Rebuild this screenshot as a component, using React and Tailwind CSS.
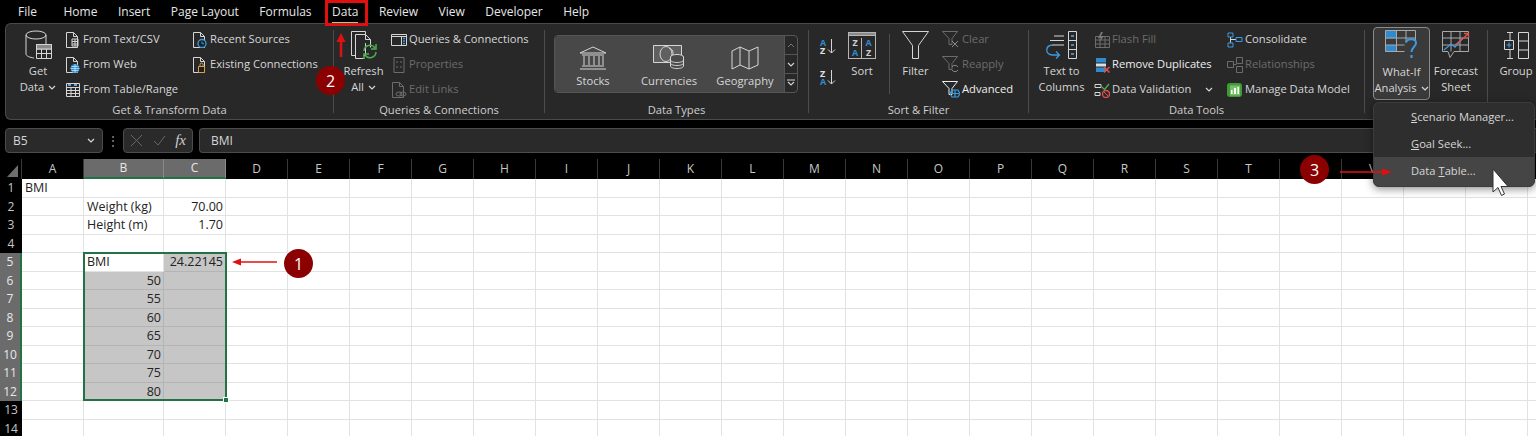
import React from "react";

const columns = ["A","B","C","D","E","F","G","H","I","J","K","L","M","N","O","P","Q","R","S","T","U","V","W","X","Y"];
const colWidth = { A: "w-[62px]", B: "w-[80px]" };
const tabs = ["Home", "Insert", "Page Layout", "Formulas", "Data", "Review", "View", "Developer", "Help"];

const cells = {
    1: { A: "BMI" },
    2: { B: "Weight (kg)", C: "70.00" },
    3: { B: "Height (m)", C: "1.70" },
    5: { B: "BMI", C: "24.22145" },
    6: { B: "50" },
    7: { B: "55" },
    8: { B: "60" },
    9: { B: "65" },
    10: { B: "70" },
    11: { B: "75" },
    12: { B: "80" },
};

function Svg({ w = 16, h = 16, children, className = "" }) {
    return (
        <svg width={w} height={h} viewBox={`0 0 ${w} ${h}`} fill="none" stroke="currentColor" strokeWidth="1" className={`shrink-0 ${className}`}>
            {children}
        </svg>
    );
}

const Doc = () => <path d="M1.5 .5h7l4 4v11h-11z M8.5 .5v4h4" />;

const TextCsvIcon = () => (
    <Svg><Doc /><path d="M7 7h6v7H7z M7 9.5h6 M7 12h6 M10 7v7" /></Svg>
);
const WebIcon = () => (
    <Svg>
        <Doc />
        <circle cx="10" cy="11.5" r="4.5" fill="#2e8bd0" stroke="none" />
        <path d="M5.5 11.5h9 M10 7v9 M6.5 9.5h7 M6.5 13.5h7" stroke="#d8ecfa" strokeWidth=".7" />
    </Svg>
);
const TableIcon = () => (
    <Svg>
        <path d="M1.5 1.5h13v13h-13z M1.5 5.5h13 M1.5 8.5h13 M1.5 11.5h13 M6 5.5v9 M10.5 5.5v9" />
        <path d="M3 3h3 M9 3h3" stroke="#5aa9e0" strokeWidth="2" />
    </Svg>
);
const RecentIcon = () => (
    <Svg>
        <Doc />
        <circle cx="10" cy="11.5" r="4" fill="#1f1f1f" stroke="#3b9ae0" strokeWidth="1.3" />
        <path d="M10 9.5v2.2h2" stroke="#3b9ae0" />
    </Svg>
);
const ExistingIcon = () => (
    <Svg>
        <Doc />
        <path d="M6.5 9.5h6v6h-6z" fill="#1f1f1f" stroke="#d9a04a" />
        <path d="M8 9.5V7.5a1.5 1.5 0 0 1 3 0v2" stroke="#d9a04a" />
    </Svg>
);
const QueriesIcon = () => (
    <Svg>
        <path d="M.5 2.5h15v11H.5z M.5 4.5h15" />
        <path d="M10.5 5v8" />
        <path d="M12 6.5h2 M12 9h2 M12 11.5h2" stroke="#3b9ae0" strokeWidth="1.4" />
    </Svg>
);
const PropsIcon = () => (
    <Svg><path d="M3 .5h10v15H3z M5 5h2 M9 5h2 M5 10h2 M9 10h2" /></Svg>
);
const LinksIcon = () => (
    <Svg>
        <Doc />
        <ellipse cx="8" cy="12" rx="3" ry="2" />
        <ellipse cx="12" cy="12" rx="3" ry="2" />
    </Svg>
);
const GetDataIcon = () => (
    <Svg w={28} h={30}>
        <ellipse cx="12" cy="5" rx="10" ry="4" />
        <path d="M2 5v19c0 2 4 3.5 8 4 M22 5v9" />
        <path d="M12.5 14.5h15v14h-15z M12.5 19h15 M12.5 23.5h15 M17.5 14.5v14 M22.5 14.5v14" fill="#282828" />
        <path d="M12.5 14.5h15v4.5h-15z" fill="#8a8a8a" />
    </Svg>
);
const RefreshIcon = () => (
    <Svg w={28} h={30}>
        <path d="M1.5 1.5h14v24h-14z" />
        <path d="M5.5 4.5h10l5 5v8 M5.5 4.5v24h9 M15.5 4.5v5h5" fill="#282828" />
        <path d="M14 21a6 6 0 0 1 11-3 M26 22a6 6 0 0 1-11 3" stroke="#4caf50" strokeWidth="1.5" />
        <path d="M26 14v5h-5 M14 29v-5h5" stroke="#4caf50" strokeWidth="1.5" />
    </Svg>
);
const BankIcon = () => (
    <Svg w={28} h={24}>
        <path d="M1 7 14 1l13 6z M3 9h22 M5 10v9 M10 10v9 M15 10v9 M20 10v9 M24 10v9 M3 20h22 M1 23h26" />
    </Svg>
);
const CurrencyIcon = () => (
    <Svg w={32} h={26}>
        <path d="M.5 1.5h28v17H.5z" fill="#8f8f8f" fillOpacity=".35" />
        <ellipse cx="13" cy="10" rx="6" ry="7.5" />
        <path d="M19 12a5 5 0 0 0-3-8" />
        <ellipse cx="24" cy="13" rx="6.5" ry="2.5" fill="#4a4a4a" />
        <path d="M17.5 13v9c0 1.5 3 2.5 6.500 2.500s6.500-1 6.500-2.500v-9 M17.500 16c0 1.500 3 2.500 6.500 2.500s6.500-1 6.500-2.500 M17.500 19c0 1.500 3 2.500 6.500 2.500s6.500-1 6.500-2.500" fill="#4a4a4a" />
    </Svg>
);
const MapIcon = () => (
    <Svg w={28} h={24}>
        <path d="M1 5l8-4 9 4 9-4v18l-9 4-9-4-8 4z M9 1v18 M18 5v18" />
    </Svg>
);
const ChevUp = () => <Svg w={8} h={5}><path d="M1 4l3-3 3 3" /></Svg>;
const ChevDown = ({ className = "" }) => <Svg w={8} h={5} className={className}><path d="M1 1l3 3 3-3" strokeWidth="1.2" /></Svg>;
const MoreDown = () => <Svg w={8} h={8}><path d="M0 1h8 M1 3l3 3 3-3" strokeWidth="1.2" /></Svg>;

const SortAz = ({ flip }) => (
    <div className="relative flex items-center w-[18px] h-[17px]">
        <div className="flex flex-col text-[9px] leading-[8px] font-bold">
            <span className={flip ? "text-[#e0e0e0]" : "text-[#2e8bd0]"}>{flip ? "Z" : "A"}</span>
            <span className={flip ? "text-[#2e8bd0]" : "text-[#e0e0e0]"}>{flip ? "A" : "Z"}</span>
        </div>
        <Svg w={9} h={15} className="ml-[1px]"><path d="M4.500 0v14 M1 10.500l3.500 3.500 3.500-3.500" /></Svg>
    </div>
);
const SortIcon = () => (
    <div className="w-[28px] h-[27px] border border-[#b5b5b5] flex flex-col">
        <div className="h-[3px] border-b border-[#b5b5b5] bg-[#8a8a8a]" />
        <div className="flex-1 grid grid-cols-2 text-[9px] leading-[10px] font-bold text-center pt-[2px]">
            <span className="border-r border-[#b5b5b5] text-[#cfcfcf]">Z<br /><span className="text-[#2e8bd0]">A</span></span>
            <span className="text-[#2e8bd0]">A<br /><span className="text-[#cfcfcf]">Z</span></span>
        </div>
    </div>
);
const Funnel = () => (
    <Svg w={27} h={28}>
        <path d="M.5 .5h26l-10 14v13h-6v-13z" />
    </Svg>
);
const SmallFunnel = ({ mark, color }) => (
    <Svg w={18} h={17}>
        <path d="M.5 .5h15l-5.500 7v6h-3v-6z" />
        {mark === "x" && <path d="M10 10l6 6 M16 10l-6 6" stroke={color} />}
        {mark === "r" && <path d="M10 11a3.500 3.500 0 0 1 6 0 M16 14a3.500 3.500 0 0 1-6 0" stroke={color} />}
        {mark === "a" && <path d="M10 9h6l2 3.500-2 3.500h-6l-2-3.500z M13 9v7 M9 12.500h8" stroke={color} strokeWidth="1.200" />}
    </Svg>
);
const TextColsIcon = () => (
    <Svg w={32} h={28}>
        <path d="M8 5h10 M4 9.500h14 M6 14h12" />
        <path d="M22.500 .5h8v27h-8z M22.500 9.500h8 M22.500 18.500h8" />
        <path d="M25 5h3 M25 14h3 M25 23h3" stroke="#5aa9e0" strokeWidth="1.500" />
        <path d="M6 14c-7 1-7 9 0 10h7 M10 20.500l3.500 3.500-3.500 3.500" stroke="#3b9ae0" strokeWidth="1.300" />
    </Svg>
);
const FlashIcon = () => (
    <Svg><path d="M1.500 4.500h14v11h-14z M1.500 8h14 M1.500 12h14 M6 4.500v11 M11 4.500v11" /><path d="M7 0L4 6h3l-2 5 5-7H7l2-4z" fill="#777" stroke="none" /></Svg>
);
const DuplicatesIcon = () => (
    <Svg>
        <rect x="2" y="1" width="10" height="4.500" fill="#2e8bd0" stroke="none" />
        <rect x="2" y="6.500" width="10" height="3" fill="#dedede" stroke="none" />
        <rect x="2" y="10.500" width="10" height="4.500" fill="#2e8bd0" stroke="none" />
        <path d="M10 10l5.500 5.500 M15.500 10L10 15.500" stroke="#e0524a" strokeWidth="1.500" />
    </Svg>
);
const ValidationIcon = () => (
    <Svg>
        <path d="M1 2.500h6v3H1z M1 10.500h5v3H1z" />
        <path d="M8 5l2.500 2.500L15 2" stroke="#4caf50" strokeWidth="1.300" />
        <circle cx="12" cy="12" r="3.500" stroke="#e0524a" strokeWidth="1.300" />
        <path d="M9.500 9.500l5 5" stroke="#e0524a" />
    </Svg>
);
const ConsolidateIcon = () => (
    <Svg>
        <path d="M3.500 5v6 M3.500 7.500H9" />
        <path d="M1 1h5v4H1z M1 11h5v4H1z M9 5.500h6v4H9z" stroke="#3b9ae0" />
    </Svg>
);
const RelationsIcon = () => (
    <Svg><path d="M.5 4.500h6v6h-6z M9.500 .5h6v6h-6z M9.500 9.500h6v6h-6z M6.500 7.500h3" /></Svg>
);
const ModelIcon = () => (
    <svg width="16" height="16" viewBox="0 0 16 16" className="shrink-0">
        <rect x="0" y="1" width="15" height="14" rx="3" fill="#3f9c35" />
        <path d="M3 3.500h10v10H3z" fill="#7ac06c" />
        <path d="M7 6h2v6H7z M10.500 5h1.500v7h-1.500z M4 8h1.500v4H4z" fill="#fff" />
    </svg>
);
const WhatIfIcon = () => (
    <Svg w={34} h={32}>
        <rect x=".5" y=".5" width="11" height="8" fill="#2e8bd0" stroke="none" />
        <rect x=".5" y="15" width="11" height="7" fill="#2e8bd0" stroke="none" />
        <path d="M.5 .5h30v13 M.5 .5v21h19 M.5 8h30 M.5 15h19 M11.500 .5v21 M21 .5v12" stroke="#a8a8a8" />
        <path d="M21 12.500c1-4.500 10-4.500 10 .5 0 4-4.500 4-4.500 9" stroke="#3b9ae0" strokeWidth="2" />
        <path d="M26.500 25v3" stroke="#3b9ae0" strokeWidth="2.200" />
    </Svg>
);
const ForecastIcon = () => (
    <Svg w={28} h={28}>
        <path d="M.5 .5h26v20H12l-4 6-2-6H.5z M.5 7h26 M.5 14h26 M9 .5v20 M18 .5v20" stroke="#a8a8a8" />
        <path d="M2 19l7-6 4 3 8-9" stroke="#3b9ae0" strokeWidth="1.300" />
        <path d="M13 14l5-4 8-7 M22 2.500h4.500V7" stroke="#e0524a" strokeWidth="1.300" />
    </Svg>
);
const GroupIcon = () => (
    <Svg w={25} h={27}>
        <path d="M3 .5h6 M6 .5v8 M.5 8.500h9v9h-9z M6 17.500v9 M3 26.500h6" />
        <path d="M5 10.500v5 M2.500 13h5" stroke="#3b9ae0" strokeWidth="1.200" />
        <path d="M14.500 .5h10v26h-10z M14.500 9h10 M14.500 18h10" />
    </Svg>
);

function RowItem({ icon, label, disabled, bright, children }) {
    return (
        <div className={`h-[25px] flex items-center gap-[2px] whitespace-nowrap ${disabled ? "text-[#6c6c6c]" : bright ? "text-[#eeeeee]" : "text-[#d6d6d6]"}`}>
            {icon}
            <span>{label}</span>
            {children}
        </div>
    );
}

function LargeButton({ icon, lines, chevron, className = "" }) {
    return (
        <div className={`flex flex-col items-center text-center text-[#d6d6d6] leading-[16px] whitespace-nowrap ${className}`}>
            <div className="h-[36px] flex items-center">{icon}</div>
            {lines.map((line, i) => (
                <div key={line} className="flex items-center gap-[4px]">
                    {line}
                    {chevron && i === lines.length - 1 && <ChevDown />}
                </div>
            ))}
        </div>
    );
}

function Group({ width, label, children }) {
    return (
        <div className={`${width} flex flex-col shrink-0`}>
            <div className="h-[75px] mt-[3px] flex">{children}</div>
            <div className="h-[16px] leading-[16px] text-center text-[#cfcfcf] whitespace-nowrap">{label}</div>
        </div>
    );
}

const Sep = () => <div className="w-px my-[6px] bg-[#4c4c4c] shrink-0" />;

function GalleryItem({ icon, label }) {
    return (
        <div className="w-[76px] flex flex-col items-center text-[#d6d6d6]">
            <div className="h-[37px] flex items-end pb-[3px]">{icon}</div>
            <span className="leading-[16px]">{label}</span>
        </div>
    );
}

function Ribbon() {
    return (
        <div className="h-[97px] ml-[5px] flex border border-r-0 border-[#4a4a4a] rounded-l-md bg-[#282828] text-[11.2px]">
            <Group width="w-[327px]" label="Get & Transform Data">
                <LargeButton className="w-[59px] pl-[8px] pr-[3px]" icon={<GetDataIcon />} lines={["Get", "Data"]} chevron />
                <div className="w-[127px] text-[#d6d6d6]">
                    <RowItem icon={<TextCsvIcon />} label="From Text/CSV" />
                    <RowItem icon={<WebIcon />} label="From Web" />
                    <RowItem icon={<TableIcon />} label="From Table/Range" />
                </div>
                <div>
                    <RowItem icon={<RecentIcon />} label="Recent Sources" />
                    <RowItem icon={<ExistingIcon />} label="Existing Connections" />
                </div>
            </Group>
            <Sep />
            <Group width="w-[210px]" label="Queries & Connections">
                <LargeButton className="w-[57px] pl-[2px]" icon={<RefreshIcon />} lines={["Refresh", "All"]} chevron />
                <div>
                    <RowItem icon={<QueriesIcon />} label="Queries & Connections" />
                    <RowItem icon={<PropsIcon />} label="Properties" disabled />
                    <RowItem icon={<LinksIcon />} label="Edit Links" disabled />
                </div>
            </Group>
            <Sep />
            <Group width="w-[263px]" label="Data Types">
                <div className="ml-[9px] mt-[8px] h-[58px] w-[244px] flex rounded border border-[#555] overflow-hidden">
                    <div className="w-[229px] flex bg-[#484848]">
                        <GalleryItem icon={<BankIcon />} label="Stocks" />
                        <GalleryItem icon={<CurrencyIcon />} label="Currencies" />
                        <GalleryItem icon={<MapIcon />} label="Geography" />
                    </div>
                    <div className="flex-1 flex flex-col text-[#d0d0d0] border-l border-[#555]">
                        <div className="flex-1 flex items-center justify-center border-b border-[#555] text-[#777]"><ChevUp /></div>
                        <div className="flex-1 flex items-center justify-center border-b border-[#555]"><ChevDown /></div>
                        <div className="flex-1 flex items-center justify-center"><MoreDown /></div>
                    </div>
                </div>
            </Group>
            <Sep />
            <Group width="w-[219px]" label="Sort & Filter">
                <div className="w-[33px] pl-[11px] pt-[11px] flex flex-col gap-[14px] text-[#d6d6d6]">
                    <SortAz />
                    <SortAz flip />
                </div>
                <LargeButton className="w-[40px]" icon={<SortIcon />} lines={["Sort"]} />
                <div className="w-px h-[60px] mt-[7px] ml-[7px] bg-[#4c4c4c]" />
                <LargeButton className="w-[51px]" icon={<Funnel />} lines={["Filter"]} />
                <div className="ml-[1px]">
                    <RowItem icon={<SmallFunnel mark="x" color="#8a8a8a" />} label="Clear" disabled />
                    <RowItem icon={<SmallFunnel mark="r" color="#8a8a8a" />} label="Reapply" disabled />
                    <RowItem icon={<SmallFunnel mark="a" color="#3b9ae0" />} label="Advanced" bright />
                </div>
            </Group>
            <Sep />
            <Group width="w-[335px]" label="Data Tools">
                <LargeButton className="w-[65px]" icon={<TextColsIcon />} lines={["Text to", "Columns"]} />
                <div className="w-[133px]">
                    <RowItem icon={<FlashIcon />} label="Flash Fill" disabled />
                    <RowItem icon={<DuplicatesIcon />} label="Remove Duplicates" bright />
                    <RowItem icon={<ValidationIcon />} label="Data Validation">
                        <ChevDown className="ml-[12px]" />
                    </RowItem>
                </div>
                <div>
                    <RowItem icon={<ConsolidateIcon />} label="Consolidate" />
                    <RowItem icon={<RelationsIcon />} label="Relationships" disabled />
                    <RowItem icon={<ModelIcon />} label="Manage Data Model" />
                </div>
            </Group>
            <Sep />
            <Group width="w-[122px]" label="">
                <LargeButton className="ml-[8px] w-[57px] h-[73px] rounded border border-[#8a8a8a] bg-[#3a3a3a]" icon={<WhatIfIcon />} lines={["What-If", "Analysis"]} chevron />
                <LargeButton className="ml-[1px] w-[50px]" icon={<ForecastIcon />} lines={["Forecast", "Sheet"]} />
            </Group>
            <Sep />
            <Group width="w-[48px]" label="">
                <LargeButton className="w-full pl-[8px]" icon={<GroupIcon />} lines={["Group"]} />
            </Group>
        </div>
    );
}

function FormulaBar() {
    return (
        <div className="h-[25px] mt-[8px] flex items-stretch text-[12px] text-[#d6d6d6]">
            <div className="ml-[5px] w-[98px] flex items-center justify-between px-[7px] rounded border border-[#4c4c4c] bg-[#2a2a2a]">
                B5
                <ChevDown />
            </div>
            <div className="w-[20px] flex items-center justify-center text-[#9a9a9a]">⋮</div>
            <div className="w-[70px] flex items-center justify-between px-[6px] rounded border border-[#4c4c4c] bg-[#2a2a2a]">
                <Svg w={13} h={13} className="text-[#666]"><path d="M1 1l11 11 M12 1L1 12" /></Svg>
                <Svg w={13} h={13} className="text-[#666]"><path d="M1 7l4 4 7-9" /></Svg>
                <span className="font-['Liberation_Serif',serif] italic text-[15px] text-[#cfcfcf]">fx</span>
            </div>
            <div className="ml-[6px] flex-1 flex items-center pl-[11px] rounded-l border border-r-0 border-[#4c4c4c] bg-[#2a2a2a]">BMI</div>
        </div>
    );
}

function HeaderRow() {
    return (
        <div className="h-[20px] mt-[6px] flex bg-black text-[12px] text-[#c8c8c8]">
            <div className="w-[22px] shrink-0 flex items-end justify-end pr-[3px] pb-[2px] border-r border-[#3a3a3a]">
                <div className="w-[11px] h-[12px] bg-[#6e6e6e] [clip-path:polygon(100%_0,100%_100%,0_100%)]" />
            </div>
            {columns.map((col) => {
                const active = col === "B" || col === "C";
                return (
                    <div
                        key={col}
                        className={`${colWidth[col] || "w-[62px]"} shrink-0 flex items-center justify-center border-r ${active ? "bg-[#6b6b6b] text-[#e8e8e8] border-[#8a8a8a] border-b-2 border-b-[#217346]" : "border-[#3a3a3a]"}`}
                    >
                        {col === "Y" ? "" : col}
                    </div>
                );
            })}
        </div>
    );
}

function Row({ n }) {
    const active = n >= 5 && n <= 12;
    return (
        <div className="h-[18.5px] flex text-[12.5px] leading-[18px]">
            <div className={`w-[22px] shrink-0 flex items-center justify-center text-[12px] ${active ? "bg-[#6b6b6b] text-[#e8e8e8] border-r-2 border-[#217346]" : "bg-black text-[#c8c8c8]"}`}>
                {n}
            </div>
            {columns.map((col) => {
                const value = cells[n]?.[col];
                const filled = active && (col === "B" || col === "C") && !(n === 5 && col === "B");
                const right = value && /^[0-9.]+$/.test(value);
                return (
                    <div
                        key={col}
                        className={`${colWidth[col] || "w-[62px]"} shrink-0 pl-[3px] pr-[2px] whitespace-nowrap border-r border-b text-[#222] ${right ? "text-right" : ""} ${filled ? "bg-[#c6c6c6] border-[#b4b4b4]" : "bg-white border-[#e2e2e2]"}`}
                    >
                        {value}
                    </div>
                );
            })}
        </div>
    );
}

function Badge({ n, className }) {
    return (
        <div className={`absolute w-[29px] h-[29px] rounded-full bg-[#8b0000] text-white text-[16px] flex items-center justify-center ${className}`}>
            {n}
        </div>
    );
}

function Menu() {
    const Item = ({ pre, u, post, active }) => (
        <div className={`h-[27px] pl-[37px] text-[#d6d6d6] leading-[27px] ${active ? "bg-[#454545] h-[29px]" : ""}`}>
            <span>{pre}<span className="underline">{u}</span>{post}</span>
        </div>
    );
    return (
        <div className="absolute left-[1373px] top-[102px] w-[162px] rounded-md bg-[#2e2e2e] border border-[#3c3c3c] overflow-hidden text-[11.2px] shadow-[0_2px_8px_rgba(0,0,0,0.45)]">
            <Item pre="" u="S" post="cenario Manager..." />
            <Item pre="" u="G" post="oal Seek..." />
            <Item pre="Data " u="T" post="able..." active />
        </div>
    );
}

export default function App() {
    return (
        <div className="relative w-[1536px] h-[436px] overflow-hidden bg-black font-['Open_Sans',sans-serif]">
            <div className="h-[23px] flex items-center pl-[18px] gap-[20.5px] text-[12px] text-[#e6e6e6]">
                <span className="mr-[6px]">File</span>
                {tabs.map((tab) => (
                    <div key={tab} className="relative whitespace-nowrap">
                        {tab}
                        {tab === "Data" && <div className="absolute left-0 right-0 -bottom-[3px] h-[2px] bg-[#8fd3a8]" />}
                    </div>
                ))}
            </div>
            <Ribbon />
            <FormulaBar />
            <HeaderRow />
            {Array.from({ length: 14 }, (_, i) => <Row key={i} n={i + 1} />)}

            <div className="absolute left-[83px] top-[252px] w-[144px] h-[149px] border-2 border-[#217346]" />
            <div className="absolute left-[223px] top-[397px] w-[6px] h-[6px] bg-[#217346] border border-white" />

            <Menu />

            <div className="absolute left-[325px] top-0 w-[43px] h-[26px] border-[3px] border-[#e01010]" />
            <Badge n="2" className="left-[316px] top-[66px]" />
            <Badge n="1" className="left-[284px] top-[249px]" />
            <Badge n="3" className="left-[1300px] top-[155px]" />

            {/* red arrows */}
            <svg width="1536" height="436" className="absolute left-0 top-0 pointer-events-none">
                <path d="M341 57V40" stroke="#e01010" strokeWidth="2.500" />
                <path d="M341 33l-4.500 9h9z" fill="#e01010" />
                <path d="M277 262H240" stroke="#e01010" strokeWidth="1.500" />
                <path d="M232 262l9-3.500v7z" fill="#e01010" />
                <path d="M1340 172h42" stroke="#e01010" strokeWidth="1.500" />
                <path d="M1392 172l-10-3.500v7z" fill="#e01010" />
                <path d="M1493 169v23l5-4.500 3.500 8 3-1.500-3.500-7.500h7z" fill="#fff" stroke="#333" strokeWidth="1" />
            </svg>
        </div>
    );
}
